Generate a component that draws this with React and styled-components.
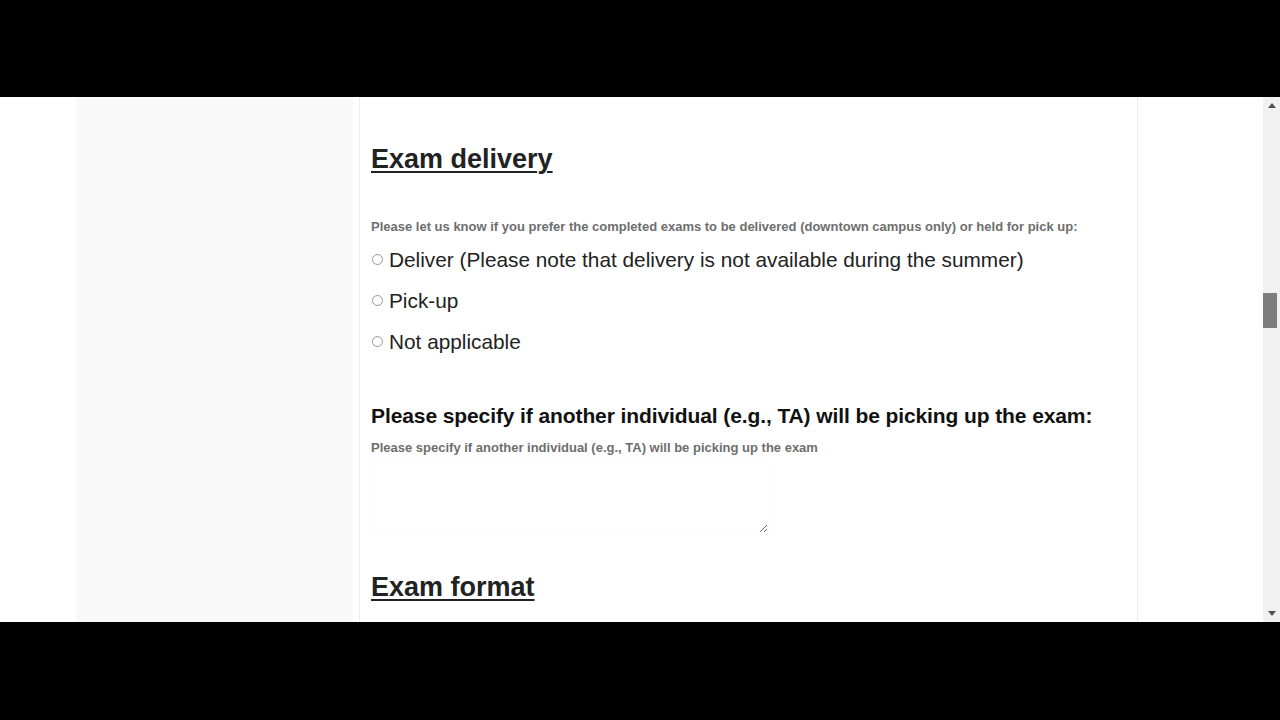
import React from 'react'
import styled, { createGlobalStyle } from 'styled-components'

const GlobalStyle = createGlobalStyle`
    html, body {
        margin: 0;
        padding: 0;
        background: #000;
        font-family: "Liberation Sans", Arial, sans-serif;
    }
`

const Frame = styled.div`
    width: 1280px;
    height: 720px;
    display: flex;
    flex-direction: column;
    background: #000;
    overflow: hidden;
`

const Letterbox = styled.div`
    height: ${p => p.h}px;
    flex: 0 0 auto;
    background: #000;
`

const Viewport = styled.div`
    height: 525px;
    display: flex;
    background: #fff;
    overflow: hidden;
`

const Gutter = styled.div`
    flex: 0 0 ${p => p.w}px;
    background: #fff;
`

const Sidebar = styled.div`
    flex: 0 0 277px;
    background: #f9f9f9;
`

const Main = styled.main`
    flex: 0 0 766px;
    border-left: 1px solid #ededed;
    border-right: 1px solid #ededed;
    padding: 46px 0 0 11px;
    color: #222;
`

const SectionTitle = styled.h2`
    margin: 0;
    font-size: 27px;
    line-height: 32px;
    font-weight: bold;
    text-decoration: underline;
    text-underline-offset: 3px;
    text-decoration-thickness: 2px;
    color: #222;
    margin-top: ${p => p.top || 0}px;
`

const Hint = styled.p`
    margin: ${p => p.top}px 0 0;
    font-size: 13px;
    line-height: 16px;
    font-weight: bold;
    color: #6e6e6e;
`

const RadioList = styled.div`
    margin-top: 4px;
    display: flex;
    flex-direction: column;
`

const RadioRow = styled.label`
    height: 41px;
    display: flex;
    align-items: center;
    font-size: 20.8px;
    color: #222;
    cursor: pointer;
`

const Radio = styled.input.attrs({ type: 'radio' })`
    appearance: none;
    margin: 0 6px 0 1px;
    width: 11px;
    height: 11px;
    border: 1px solid #9a9a9a;
    border-radius: 50%;
    background: #fff;
    box-sizing: border-box;
`

const Question = styled.h3`
    margin: 42px 0 0;
    font-size: 21px;
    line-height: 24px;
    font-weight: bold;
    color: #111;
    letter-spacing: -0.1px;
`

const Answer = styled.textarea`
    display: block;
    margin-top: 6px;
    width: 398px;
    height: 72px;
    border: 1px solid #fbfbfb;
    background: #fff;
    box-sizing: border-box;
    font-family: inherit;
    outline: none;
`

const Scrollbar = styled.div`
    flex: 0 0 17px;
    margin-left: auto;
    background: #f1f1f1;
    display: flex;
    flex-direction: column;
    align-items: center;
`

const Arrow = styled.div`
    height: 17px;
    width: 17px;
    display: flex;
    align-items: center;
    justify-content: center;
`

const Track = styled.div`
    flex: 1;
    width: 100%;
    padding-top: 179px;
    box-sizing: border-box;
`

const Thumb = styled.div`
    width: 14px;
    height: 35px;
    background: #7d7d7d;
`

const deliveryOptions = [
    'Deliver (Please note that delivery is not available during the summer)',
    'Pick-up',
    'Not applicable',
]

const App = () => {
    return (
        <Frame>
            <GlobalStyle />
            <Letterbox h={97} />
            <Viewport>
                <Gutter w={76} />
                <Sidebar />
                <Gutter w={6} />
                <Main>
                    <SectionTitle>Exam delivery</SectionTitle>
                    <Hint top={44}>
                        Please let us know if you prefer the completed exams to be delivered (downtown campus only) or held for pick up:
                    </Hint>
                    <RadioList>
                        {deliveryOptions.map(opt => (
                            <RadioRow key={opt}>
                                <Radio name='delivery' />
                                {opt}
                            </RadioRow>
                        ))}
                    </RadioList>
                    <Question>Please specify if another individual (e.g., TA) will be picking up the exam:</Question>
                    <Hint top={12}>Please specify if another individual (e.g., TA) will be picking up the exam</Hint>
                    <Answer />
                    <SectionTitle top={37}>Exam format</SectionTitle>
                </Main>
                <Scrollbar>
                    <Arrow>
                        <svg width='8' height='5' viewBox='0 0 8 5'><path d='M0 5 L4 0 L8 5 Z' fill='#505050' /></svg>
                    </Arrow>
                    <Track>
                        <Thumb />
                    </Track>
                    <Arrow>
                        <svg width='8' height='5' viewBox='0 0 8 5'><path d='M0 0 L4 5 L8 0 Z' fill='#505050' /></svg>
                    </Arrow>
                </Scrollbar>
            </Viewport>
            <Letterbox h={98} />
        </Frame>
    )
}

export default App
